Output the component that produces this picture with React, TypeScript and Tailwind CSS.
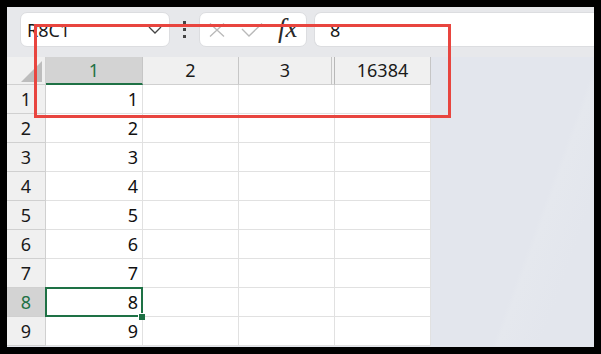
import React from "react";

/* ===================== DATA ===================== */

const columns = [
    { label: "1", width: "w-[97px]", selected: true },
    { label: "2", width: "w-[96px]", selected: false },
    { label: "3", width: "w-[93px]", selected: false },
    { label: "16384", width: "w-[96px]", selected: false },
];

const rows = [1, 2, 3, 4, 5, 6, 7, 8, 9];
const activeRow = 8;

const font = "font-['Noto_Sans',_'Open_Sans',_sans-serif]";

/* ===================== PARTS ===================== */

const Toolbar: React.FC = () => (
    <div className="flex h-[50px] items-start bg-[#e7e8eb] pt-[5px]">
        {/* name box */}
        <div className="ml-[13px] flex h-[35px] w-[150px] items-center justify-between rounded-[7px] border border-[#dcdde0] bg-white pl-[6px] pr-[7px]">
            <span className="text-[18px] leading-none text-[#1a1a1a]">R8C1</span>
            <svg width="14" height="8" viewBox="0 0 14 8" fill="none">
                <path d="M1 1l6 6 6-6" stroke="#444" strokeWidth="1.3" />
            </svg>
        </div>

        {/* more options dots */}
        <div className="ml-[13px] mr-[13px] flex h-[35px] flex-col items-center justify-center gap-[4px]">
            <span className="h-[3px] w-[3px] bg-[#444]" />
            <span className="h-[3px] w-[3px] bg-[#444]" />
            <span className="h-[3px] w-[3px] bg-[#444]" />
        </div>

        {/* cancel / enter / fx */}
        <div className="flex h-[35px] w-[108px] items-center rounded-[7px] border border-[#dcdde0] bg-white pl-[9px]">
            <svg width="16" height="14" viewBox="0 0 16 14" fill="none">
                <path d="M1 0.5l14 13M15 0.5l-14 13" stroke="#b9b9b9" strokeWidth="1.3" />
            </svg>
            <svg className="ml-[16px]" width="22" height="14" viewBox="0 0 22 14" fill="none">
                <path d="M1 6l7 7L21 0.5" stroke="#b9b9b9" strokeWidth="1.3" />
            </svg>
            <span className="ml-[15px] -mt-[3px] font-['Liberation_Serif',_'DejaVu_Serif',_serif] text-[27px] italic leading-none text-[#2a2a2a]">
                fx
            </span>
        </div>

        {/* formula input */}
        <div className="ml-[7px] flex h-[35px] flex-1 items-center rounded-l-[7px] border border-r-0 border-[#dcdde0] bg-white pl-[15px]">
            <span className="text-[18px] leading-none text-[#1a1a1a]">8</span>
        </div>
    </div>
);

const HeaderRow: React.FC = () => (
    <div className="flex h-[28px]">
        <div className="relative h-[28px] w-[39px] border-r border-b border-[#d0d0d0] bg-[#f0f0f0]">
            <svg className="absolute bottom-[2px] right-[3px]" width="21" height="21" viewBox="0 0 21 21">
                <path d="M21 0V21H0Z" fill="#bdbdbd" />
            </svg>
        </div>
        {columns.map((col, i) => (
            <React.Fragment key={col.label}>
                <div
                    className={
                        col.selected
                            ? `${col.width} flex h-[28px] items-center justify-center border-r border-b-2 border-r-[#c6c6c6] border-b-[#1e7145] bg-[#d3d3d3] text-[18px] text-[#1e7145]`
                            : `${col.width} flex h-[28px] items-center justify-center border-r border-b border-r-[#c6c6c6] border-b-[#d0d0d0] bg-[#f0f0f0] text-[18px] text-[#1a1a1a]`
                    }
                >
                    {col.label}
                </div>
                {i === 2 && <div className="h-[28px] w-[3px] border-r border-b border-r-[#b8b8b8] border-b-[#d0d0d0] bg-[#f0f0f0]" />}
            </React.Fragment>
        ))}
    </div>
);

const BodyRow: React.FC<{ n: number }> = ({ n }) => {
    const isActive = n === activeRow;
    return (
        <div className={isActive ? "relative z-10 flex h-[29px]" : "flex h-[29px]"}>
            <div
                className={
                    isActive
                        ? "flex h-[29px] w-[39px] items-center justify-center border-r border-b border-[#d0d0d0] bg-[#d3d3d3] text-[18px] text-[#1e7145]"
                        : "flex h-[29px] w-[39px] items-center justify-center border-r border-b border-[#d0d0d0] bg-[#f0f0f0] text-[18px] text-[#1a1a1a]"
                }
            >
                {n}
            </div>
            <div className="relative flex h-[29px] w-[97px] items-center justify-end border-r border-b border-[#e1e1e1] bg-white pr-[4px] text-[18px] text-[#111]">
                {n}
                {isActive && (
                    <>
                        <div className="absolute -left-px -top-px h-[30px] w-[98px] border-2 border-[#1e7145]" />
                        <div className="absolute -bottom-[4px] -right-[3px] h-[7px] w-[7px] border-l border-t border-white bg-[#1e7145]" />
                    </>
                )}
            </div>
            <div className="h-[29px] w-[96px] border-r border-b border-[#e1e1e1] bg-white" />
            <div className="h-[29px] w-[96px] border-r border-b border-[#e1e1e1] bg-white" />
            <div className="h-[29px] w-[96px] border-r border-b border-[#e1e1e1] bg-white" />
        </div>
    );
};

/* ===================== APP ===================== */

const App: React.FC = () => (
    <div className={`h-[354px] w-[601px] bg-black p-[7px] ${font}`}>
        <div className="relative flex h-[340px] w-[587px] flex-col overflow-hidden bg-[#e3e6ed]">
            <Toolbar />
            <div className="flex">
                <div className="flex w-[424px] flex-col">
                    <HeaderRow />
                    {rows.map(n => (
                        <BodyRow key={n} n={n} />
                    ))}
                </div>
                <div className="flex-1 bg-[linear-gradient(110deg,#e3e6ed_0%,#e3e6ed_62%,#e5e8ee_64%,#e3e6ed_80%)]" />
            </div>

            {/* highlight box */}
            <div className="pointer-events-none absolute left-[27px] top-[17px] z-20 h-[94px] w-[417px] border-[3px] border-[#e8453f]" />
        </div>
    </div>
);

export default App;
